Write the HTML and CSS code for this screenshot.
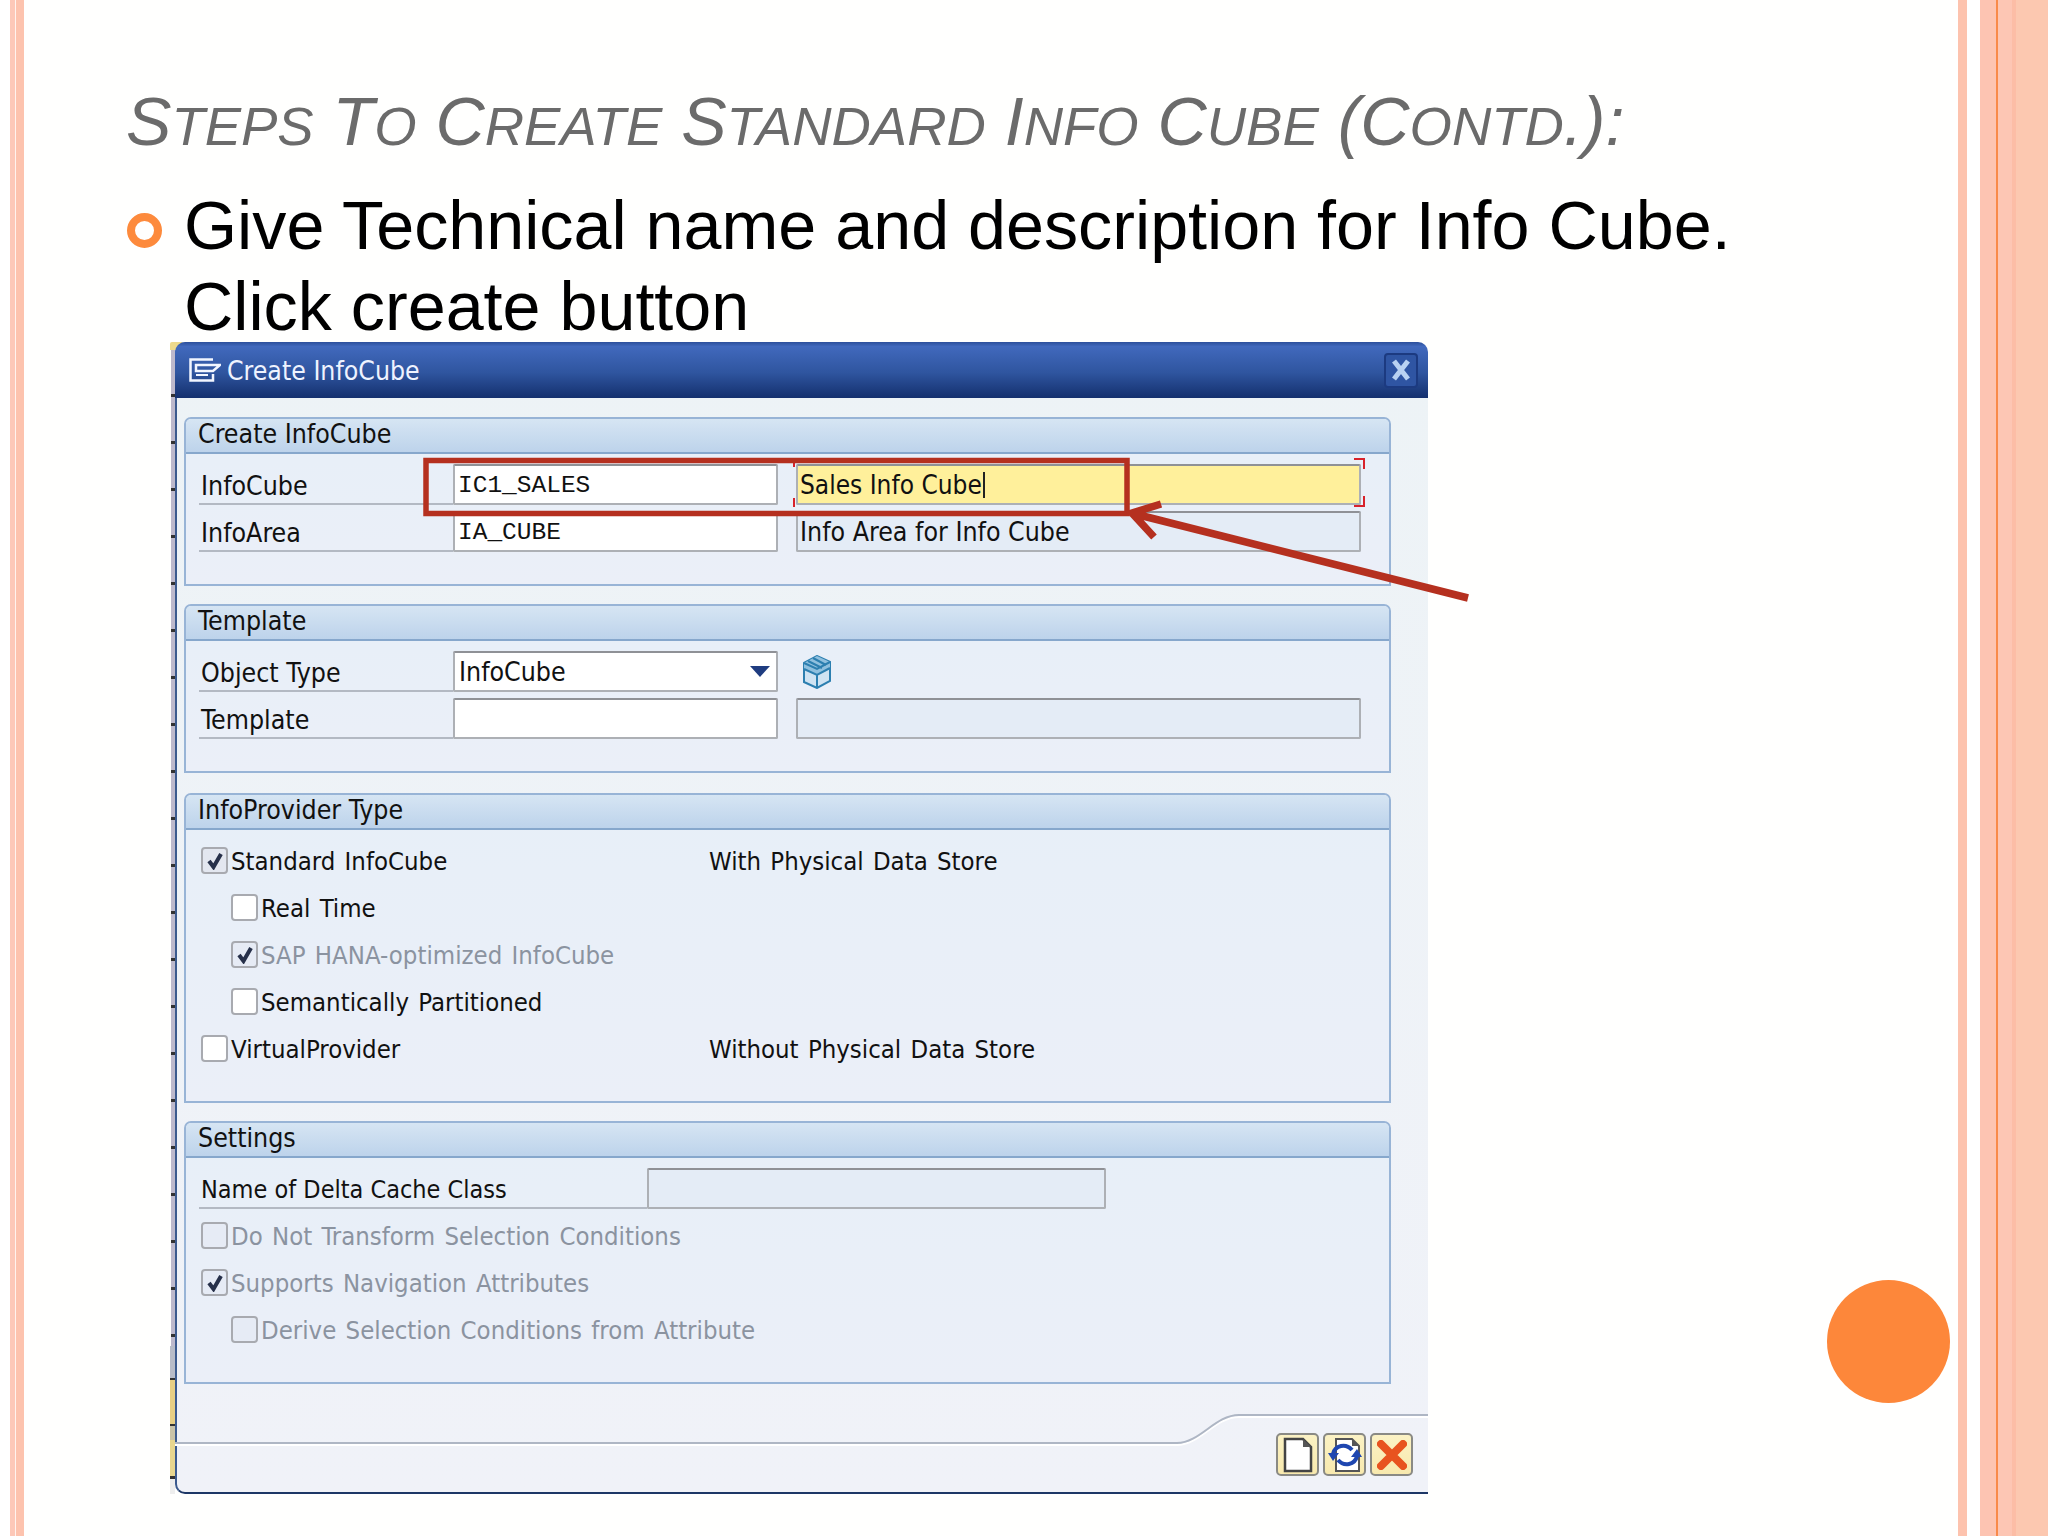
FILE: index.html
```html
<!DOCTYPE html>
<html lang="en">
<head>
<meta charset="utf-8">
<title>Steps to create standard Info Cube</title>
<link rel="stylesheet" href="styles.css">
</head>
<body>
<div class="slide">
  <div class="edge-left"></div>
  <main class="content">
    <h1 class="title">S<span class="sc">teps</span> T<span class="sc">o</span> C<span class="sc">reate</span> S<span class="sc">tandard</span> I<span class="sc">nfo</span> C<span class="sc">ube</span> (C<span class="sc">ontd</span>.):</h1>
    <div class="point">
      <span class="bullet"></span>
      <p class="point-text">Give Technical name and description for Info Cube.<br>Click create button</p>
    </div>
    <section class="dialog">
      <div class="scraps"></div>
      <div class="scraps-low"></div>
      <div class="scraps-corner"></div>
      <header class="titlebar">
        <svg class="title-icon" viewBox="0 0 32 24" width="32" height="24"><path d="M24 1.500H1.500V22.500H24V16M7 7H31L24 13H7Z" fill="none" stroke="#f2f6ff" stroke-width="2.500"/><path d="M7 17H19" stroke="#f2f6ff" stroke-width="2"/></svg>
        <span class="title-text">Create InfoCube</span>
        <span class="close"><svg viewBox="0 0 20 24" width="20" height="24"><path d="M3 3L17 21M17 3L3 21" stroke="#b9d2f2" stroke-width="5"/></svg></span>
      </header>
      <div class="dialog-body">
        <div class="group g1">
          <div class="group-head">Create InfoCube</div>
          <div class="group-body">
            <div class="row"><span class="label">InfoCube</span><span class="field mono">IC1_SALES</span><span class="field wide focus">Sales Info Cube<i class="caret"></i><b class="cn tl"></b><b class="cn tr"></b><b class="cn bl"></b><b class="cn br"></b></span></div>
            <div class="row"><span class="label">InfoArea</span><span class="field mono">IA_CUBE</span><span class="field wide ro">Info Area for Info Cube</span></div>
          </div>
        </div>
        <div class="group g2">
          <div class="group-head">Template</div>
          <div class="group-body">
            <div class="row"><span class="label">Object Type</span><span class="field select">InfoCube<svg class="drop" viewBox="0 0 20 11" width="20" height="11"><path d="M0 0H20L10 11Z" fill="#1f3c80"/></svg></span>
              <svg class="cube" viewBox="0 0 30 34" width="30" height="34"><path d="M2 8L15 1L28 7V26L15 33L2 27Z" fill="#cfe3f2" stroke="#2c7fb0" stroke-width="2"/><path d="M2 8L15 1L28 7V14L15 20L2 14Z" fill="#8fc0de"/><path d="M2 14L15 20L28 13M15 20V33M6 6L20 13M11 3L24 10M2 8L15 14L28 7" fill="none" stroke="#2c7fb0" stroke-width="2"/></svg></div>
            <div class="row"><span class="label">Template</span><span class="field"></span><span class="field wide ro"></span></div>
          </div>
        </div>
        <div class="group g3">
          <div class="group-head">InfoProvider Type</div>
          <div class="group-body">
            <div class="check-row"><span class="check on"><svg viewBox="0 0 18 18" width="18" height="18"><path d="M3 9L7.500 15L15 2" fill="none" stroke="#26304a" stroke-width="4"/></svg></span><span class="check-label">Standard InfoCube</span><span class="note">With Physical Data Store</span></div>
            <div class="check-row sub"><span class="check"></span><span class="check-label">Real Time</span></div>
            <div class="check-row sub off"><span class="check on"><svg viewBox="0 0 18 18" width="18" height="18"><path d="M3 9L7.500 15L15 2" fill="none" stroke="#26304a" stroke-width="4"/></svg></span><span class="check-label">SAP HANA-optimized InfoCube</span></div>
            <div class="check-row sub"><span class="check"></span><span class="check-label">Semantically Partitioned</span></div>
            <div class="check-row"><span class="check"></span><span class="check-label">VirtualProvider</span><span class="note">Without Physical Data Store</span></div>
          </div>
        </div>
        <div class="group g4">
          <div class="group-head">Settings</div>
          <div class="group-body">
            <div class="row"><span class="label long">Name of Delta Cache Class</span><span class="field delta ro"></span></div>
            <div class="check-row off tight"><span class="check"></span><span class="check-label">Do Not Transform Selection Conditions</span></div>
            <div class="check-row off"><span class="check on"><svg viewBox="0 0 18 18" width="18" height="18"><path d="M3 9L7.500 15L15 2" fill="none" stroke="#26304a" stroke-width="4"/></svg></span><span class="check-label">Supports Navigation Attributes</span></div>
            <div class="check-row sub off"><span class="check"></span><span class="check-label">Derive Selection Conditions from Attribute</span></div>
          </div>
        </div>
      </div>
      <footer class="dialog-foot">
        <svg class="foot-line" viewBox="0 0 1253 111" width="1253" height="111"><path d="M0 62H1002C1025 62 1040 34 1064 34H1253" fill="none" stroke="#ffffff" stroke-width="2"/><path d="M0 60H1002C1025 60 1040 32 1064 32H1253" fill="none" stroke="#aeb6c4" stroke-width="2"/></svg>
        <span class="tool"><svg viewBox="0 0 30 36" width="30" height="36"><path d="M2 2H20L28 10V34H2Z" fill="#fff" stroke="#444" stroke-width="2.500"/><path d="M20 2L28 10H20Z" fill="#555"/></svg></span>
        <span class="tool"><svg viewBox="0 0 34 36" width="34" height="36"><path d="M8 2H24L31 9V34H8Z" fill="#fff" stroke="#555" stroke-width="2"/><path d="M24 2L31 9H24Z" fill="#555"/><path d="M5 17C7 8 18 6 24 13M29 19C27 28 16 30 10 23" fill="none" stroke="#1e46b0" stroke-width="4"/><path d="M0 16H11L5 24ZM34 20H23L29 12Z" fill="#1e46b0"/></svg></span>
        <span class="tool"><svg viewBox="0 0 30 30" width="30" height="30"><path d="M4 4L26 26M26 4L4 26" stroke="#e8531f" stroke-width="8" stroke-linecap="round"/></svg></span>
      </footer>
      <svg class="callout" viewBox="0 0 1300 280" width="1300" height="280">
        <rect x="249" y="118.500" width="701" height="53" fill="none" stroke="#b5301f" stroke-width="5.500"/>
        <path d="M1291 256L958 172M984 162L955 171L977 195" fill="none" stroke="#b5301f" stroke-width="7.500"/>
      </svg>
    </section>
  </main>
  <div class="edge-right"></div>
  <div class="dot"></div>
</div>
</body>
</html>
```
FILE: styles.css
```css
html, body { margin: 0; padding: 0; background: #fff; }
.slide { position: relative; display: flex; width: 2048px; height: 1536px; overflow: hidden; background: #fffffe; font-family: "Liberation Sans", Arial, sans-serif; }
.edge-left { flex: none; width: 24px; background: linear-gradient(90deg, #fff 0 10px, #fdc8b8 10px 15px, #fff3ee 15px 16px, #fdc3ae 16px 24px); }
.edge-right { flex: none; width: 90px; background: linear-gradient(90deg, #fdc3ae 0 9px, #fff 9px 22px, #fdc4b2 22px 38px, #f98a4a 38px 40px, #fdc6b4 40px 54px, #fcbda6 54px 58px, #fcc8b0 58px 90px); }
.content { flex: 1; min-width: 0; padding-left: 102px; }
.title { margin: 0; padding-top: 81px; font-size: 68.100px; line-height: 80px; font-weight: 400; font-style: italic; color: #6b6b6b; white-space: nowrap; }
.sc { font-size: 0.8em; text-transform: uppercase; }
.point { display: flex; align-items: flex-start; margin-top: 18px; }
.bullet { flex: none; box-sizing: border-box; width: 35px; height: 35px; margin: 28px 22px 0 1px; border: 8px solid #fd8a3c; border-radius: 50%; }
.point-text { margin: 0; font-size: 68.250px; line-height: 81px; color: #000; white-space: nowrap; }
.dialog { position: absolute; left: 175px; top: 342px; box-sizing: border-box; width: 1253px; height: 1152px; display: flex; flex-direction: column; background: linear-gradient(180deg, #edf3f6, #f0f2f8); border-bottom: 2px solid #1d3766; border-left: 2px solid #3b5a8e; border-radius: 10px 10px 0 10px; font-family: "DejaVu Sans Condensed", "DejaVu Sans", sans-serif; font-stretch: condensed; font-size: 26.500px; color: #111; }
.scraps { position: absolute; left: -6px; top: 8px; height: 996px; width: 4px; background: repeating-linear-gradient(180deg, #bdb9cc 0 44px, #333 44px 47px); }
.scraps-low { position: absolute; left: -7px; top: 1004px; bottom: -2px; width: 5px; background: linear-gradient(180deg, #b8bcc8 0 32px, #333 32px 34px, #e8cf84 34px 78px, #333 78px 80px, #c9c3a8 80px 94px, #e8d68e 94px 130px, #333 130px 133px, #eee 133px); }
.scraps-corner { position: absolute; left: -7px; top: 0; width: 12px; height: 8px; background: #ecd98c; border-radius: 2px 0 0 0; }
.titlebar { position: relative; flex: none; display: flex; align-items: center; box-sizing: border-box; height: 56px; margin-left: -2px; padding: 0 10px 0 14px; background: linear-gradient(180deg, #2c4f9b 0, #4169bd 8%, #2f559f 55%, #14306e 100%); border-radius: 10px 10px 0 0; color: #eef3ff; }
.title-icon { flex: none; margin-right: 6px; }
.title-text { flex: 1; font-size: 26.400px; }
.close { flex: none; display: flex; align-items: center; justify-content: center; box-sizing: border-box; width: 34px; height: 35px; background: #2f55a3; border: 2px solid #1c3a80; border-radius: 4px; }
.dialog-body { flex: none; padding: 19px 0 0 7px; }
.group { box-sizing: border-box; width: 1207px; margin-bottom: 18px; border: 2px solid #98b4d6; border-top-width: 2px; border-radius: 7px 7px 0 0; background: linear-gradient(180deg, #e7eff8, #ebeff8); }
.g1 { height: 169px; }
.g2 { height: 169px; margin-top: 0; }
.g3 { height: 310px; margin-top: 20px; }
.g4 { height: 263px; margin: 18px 0 0; }
.group-head { box-sizing: border-box; height: 35px; padding: 0 0 0 12px; line-height: 30px; background: linear-gradient(180deg, #d6e5f3, #bdd3eb); border-bottom: 2px solid #86a7cc; border-radius: 5px 5px 0 0; font-size: 26.500px; }
.group-body { padding: 10px 0 0 13px; }
.g2 .row + .row { margin-top: 1px; }
.g3 .group-body { padding: 17px 0 0 15px; }
.g4 .group-body { padding-top: 10px; }
.row { display: flex; align-items: stretch; height: 41px; margin-bottom: 6px; }
.label { flex: none; box-sizing: border-box; width: 254px; padding: 7px 0 0 2px; line-height: 30px; border-bottom: 2px solid #b3b9c3; white-space: nowrap; }
.label.long { width: 448px; font-size: 25px; word-spacing: 0; }
.field { position: relative; flex: none; box-sizing: border-box; display: flex; align-items: center; width: 325px; padding-left: 4px; background: #fff; border: 2px solid #adb0b5; border-top-color: #8f9196; border-radius: 2px; white-space: nowrap; }
.mono { font-family: "Liberation Mono", monospace; font-size: 24.500px; font-stretch: normal; padding: 2px 0 0 3px; }
.wide { width: 565px; margin-left: 18px; padding-left: 2px; }
.delta { width: 459px; }
.ro { background: #e4ecf6; }
.focus { background: #fff09b; font-size: 26px; }
.caret { display: inline-block; width: 2px; height: 26px; margin-left: 1px; background: #222; }
.cn { position: absolute; width: 9px; height: 9px; border: 0 solid #d8222a; }
.tl { left: -5px; top: -8px; border-left-width: 2px; }
.tr { right: -6px; top: -8px; border-top-width: 2px; border-right-width: 2px; }
.bl { left: -5px; bottom: -4px; border-left-width: 2px; }
.br { right: -6px; bottom: -4px; border-bottom-width: 2px; border-right-width: 2px; }
.select { justify-content: space-between; padding-right: 6px; }
.drop { flex: none; }
.cube { flex: none; align-self: center; margin-left: 24px; }
.check-row { display: flex; align-items: center; height: 27px; margin-bottom: 20px; font-size: 25.500px; word-spacing: 2px; white-space: nowrap; }
.check-row.sub { padding-left: 30px; }
.g4 .check-row { margin-left: 2px; }
.check-row.tight { margin-top: 13px; }
.check { flex: none; box-sizing: border-box; display: flex; align-items: center; justify-content: center; width: 27px; height: 27px; margin-right: 3px; background: #fff; border: 2px solid #a8aab0; border-radius: 4px; }
.check.on { background: #e3e7f0; }
.off .check { background: #e6ebf5; }
.check-label { flex: none; }
.off .check-label { color: #8b93a0; }
.note { margin-left: auto; width: 680px; }
.dialog-foot { position: relative; flex: 1; display: flex; justify-content: flex-end; align-items: flex-start; gap: 4px; padding: 49px 15px 0 0; }
.foot-line { position: absolute; left: -2px; top: -1px; }
.tool { position: relative; box-sizing: border-box; display: flex; align-items: center; justify-content: center; width: 43px; height: 43px; background: linear-gradient(180deg, #fbf2c4, #f8e9ae); border: 2px solid #8a8a84; border-radius: 5px; }
.callout { position: absolute; left: 0; top: 0; pointer-events: none; }
.dot { position: absolute; left: 1827px; top: 1280px; width: 123px; height: 123px; border-radius: 50%; background: #fd873a; }
```
